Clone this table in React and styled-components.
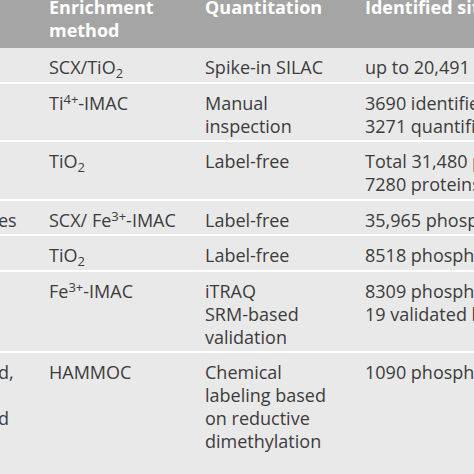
import React from "react";
import styled, { createGlobalStyle } from "styled-components";

const Global = createGlobalStyle`
  html, body {
    margin: 0;
    padding: 0;
    overflow: hidden;
    background: #e9e9e9;
  }
  body {
    width: 474px;
    height: 474px;
    font-family: "Open Sans", "Noto Sans", sans-serif;
  }
`;

const Table = styled.div`
  margin-top: -12px;
  margin-left: -2px;
  width: 620px;
  font-size: 18px;
  line-height: 23px;
  color: #3c3c3c;
`;

const Row = styled.div`
  display: grid;
  grid-template-columns: 35px 156px 160px 1fr;
  background: ${(p) => (p.$head ? "#a5a5a5" : "#e9e9e9")};
  color: ${(p) => (p.$head ? "#ffffff" : "inherit")};
  font-weight: ${(p) => (p.$head ? 700 : 400)};
  border-top: ${(p) => (p.$first ? "none" : "2px solid #ffffff")};
  padding: ${(p) => (p.$head ? "8px 0 6px" : "8px 0 2.5px")};
  padding-bottom: ${(p) => (p.$tail ? "30px" : undefined)};
`;

const Cell = styled.div`
  padding-left: 16px;
  white-space: nowrap;
`;

const Side = styled.div`
  white-space: nowrap;
  overflow: hidden;
`;

const Frag = styled.span`
  display: block;
  height: 23px;
`;

const Sub = styled.sub`
  font-size: 0.72em;
  line-height: 0;
  vertical-align: -0.3em;
`;

const Sup = styled.sup`
  font-size: 0.72em;
  line-height: 0;
  vertical-align: 0.45em;
`;

const Strong = styled.b`
  font-weight: 700;
  color: #1e1e1e;
`;

const lines = (arr) => arr.map((t, i) => <Frag key={i}>{t}</Frag>);

const rows = [
  {
    side: [],
    method: <>SCX/TiO<Sub>2</Sub></>,
    quant: ["Spike-in SILAC"],
    sites: ["up to 20,491 phosphosites"],
  },
  {
    side: [],
    method: <>Ti<Sup>4+</Sup>-IMAC</>,
    quant: ["Manual", "inspection"],
    sites: ["3690 identified phosphosites", "3271 quantified phosphosites"],
  },
  {
    side: [],
    method: <>TiO<Sub>2</Sub></>,
    quant: ["Label-free"],
    sites: [<>Total 31,480 <Strong>phosphosites</Strong></>, "7280 proteins"],
  },
  {
    side: ["es"],
    method: <>SCX/ Fe<Sup>3+</Sup>-IMAC</>,
    quant: ["Label-free"],
    sites: ["35,965 phosphosites"],
  },
  {
    side: [],
    method: <>TiO<Sub>2</Sub></>,
    quant: ["Label-free"],
    sites: ["8518 phosphosites"],
  },
  {
    side: [],
    method: <>Fe<Sup>3+</Sup>-IMAC</>,
    quant: ["iTRAQ", "SRM-based", "validation"],
    sites: ["8309 phosphosites", "19 validated by SRM"],
  },
  {
    side: ["d,", "", "d"],
    method: <>HAMMOC</>,
    quant: ["Chemical", "labeling based", "on reductive", "dimethylation"],
    sites: ["1090 phosphosites"],
  },
];

export default function App() {
  return (
    <>
      <Global />
      <Table>
        <Row $head $first>
          <Side />
          <Cell>{lines(["Enrichment", "method"])}</Cell>
          <Cell>{lines(["Quantitation"])}</Cell>
          <Cell>{lines(["Identified sites"])}</Cell>
        </Row>
        {rows.map((r, i) => (
          <Row key={i} $first={i === 0} $tail={i === rows.length - 1}>
            <Side>{lines(r.side)}</Side>
            <Cell>{r.method}</Cell>
            <Cell>{lines(r.quant)}</Cell>
            <Cell>{lines(r.sites)}</Cell>
          </Row>
        ))}
      </Table>
    </>
  );
}
